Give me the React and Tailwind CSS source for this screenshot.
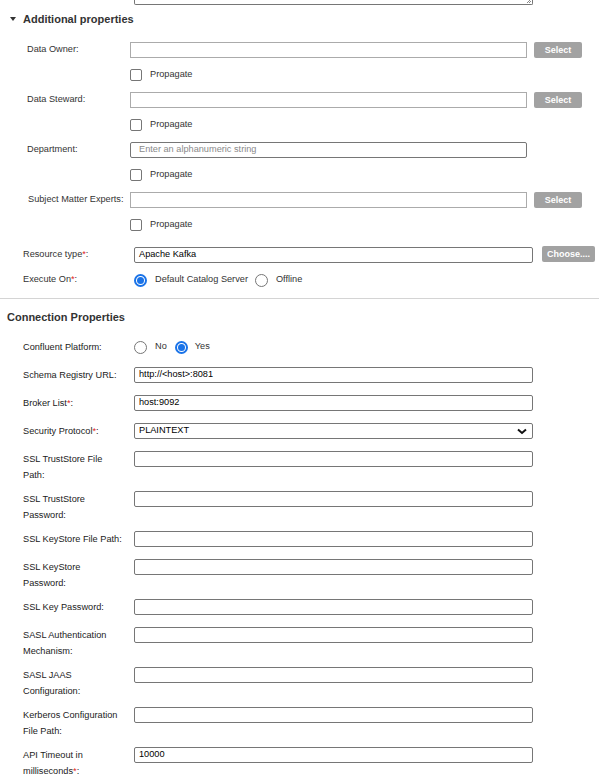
import React from 'react';

const Req = () => <span className="text-[#e0201b]">*</span>;

const Checkbox = () => (
    <span className="block w-[12px] h-[12px] rounded-[2px] border border-[#767676] bg-white" />
);

const Radio = ({ checked }) =>
    checked ? (
        <span className="flex w-[13px] h-[13px] items-center justify-center rounded-full border-2 border-[#1a73e8] bg-white">
            <span className="block w-[7px] h-[7px] rounded-full bg-[#1a73e8]" />
        </span>
    ) : (
        <span className="block w-[13px] h-[13px] rounded-full border border-[#767676] bg-white" />
    );

const GrayButton = ({ children, className = '' }) => (
    <button
        className={`h-[16px] rounded-[2px] bg-[#a2a2a2] text-[9px] font-bold text-white leading-none ${className}`}
    >
        {children}
    </button>
);

// Additional properties: label / input / select button, then a Propagate checkbox row
const PickerField = ({ label, placeholder, button = true, dark = false, labelX = 'pl-[27px]' }) => (
    <div>
        <div className="flex h-[16px] items-center">
            <div className={`w-[130px] ${labelX} text-[9.2px] text-[#333] whitespace-nowrap`}>{label}</div>
            <div
                className={`w-[397px] h-[16px] flex items-center px-[8px] text-[9.2px] bg-white ${
                    dark ? 'border border-[#767676] rounded-[2px]' : 'border border-[#ababab]'
                }`}
            >
                {placeholder && <span className="text-[#8a8a8a]">{placeholder}</span>}
            </div>
            {button && <GrayButton className="ml-[7px] w-[48px]">Select</GrayButton>}
        </div>
        <div className="mt-[8px] flex h-[18px] items-center pl-[130px]">
            <Checkbox />
            <span className="ml-[8px] text-[9.2px] text-[#333]">Propagate</span>
        </div>
    </div>
);

const CONNECTION = [
    { lines: ['Confluent Platform:'], type: 'radio', h: 'h-[28px]' },
    { lines: ['Schema Registry URL:'], value: 'http://<host>:8081', h: 'h-[28px]' },
    { lines: ['Broker List', '*:'], req: true, value: 'host:9092', h: 'h-[28px]' },
    { lines: ['Security Protocol', '*:'], req: true, type: 'select', value: 'PLAINTEXT', h: 'h-[28px]' },
    { lines: ['SSL TrustStore File', 'Path:'], h: 'h-[40px]' },
    { lines: ['SSL TrustStore', 'Password:'], h: 'h-[40px]' },
    { lines: ['SSL KeyStore File Path:'], h: 'h-[28px]' },
    { lines: ['SSL KeyStore', 'Password:'], h: 'h-[40px]' },
    { lines: ['SSL Key Password:'], h: 'h-[28px]' },
    { lines: ['SASL Authentication', 'Mechanism:'], h: 'h-[40px]' },
    { lines: ['SASL JAAS', 'Configuration:'], h: 'h-[40px]' },
    { lines: ['Kerberos Configuration', 'File Path:'], h: 'h-[40px]' },
    { lines: ['API Timeout in', 'milliseconds*:'], value: '10000', h: 'h-[40px]', apiReq: true },
];

const ConnLabel = ({ row }) => {
    if (row.req) {
        return (
            <div className="leading-[16px]">
                {row.lines[0]}
                <Req />:
            </div>
        );
    }
    return row.lines.map((line, i) => (
        <div key={i} className="leading-[16px]">
            {row.apiReq && i === 1 ? (
                <>
                    milliseconds<Req />:
                </>
            ) : (
                line
            )}
        </div>
    ));
};

const ConnControl = ({ row }) => {
    if (row.type === 'radio') {
        return (
            <div className="flex h-[16px] items-center text-[9.2px] text-[#333]">
                <Radio />
                <span className="ml-[8px]">No</span>
                <span className="ml-[8px]">
                    <Radio checked />
                </span>
                <span className="ml-[7px]">Yes</span>
            </div>
        );
    }
    if (row.type === 'select') {
        return (
            <div className="flex w-[399px] h-[16px] items-center justify-between rounded-[2px] border border-[#767676] bg-white pl-[4px] pr-[5px] text-[9.2px] text-black">
                <span>{row.value}</span>
                <svg width="10" height="7" viewBox="0 0 10 7">
                    <path d="M1 1.5 L5 5 L9 1.5" fill="none" stroke="#111" strokeWidth="2" />
                </svg>
            </div>
        );
    }
    return (
        <div className="flex w-[399px] h-[16px] items-center rounded-[2px] border border-[#767676] bg-white pl-[4px] text-[9.2px] text-black">
            {row.value}
        </div>
    );
};

export default function App() {
    return (
        <div
            className="relative w-[599px] h-[780px] overflow-hidden bg-white text-[#333]"
            style={{ fontFamily: '"Liberation Sans", Arial, sans-serif' }}
        >
            {/* bottom edge of the description textarea above */}
            <div className="relative ml-[134px] w-[399px] h-[5px] rounded-b-[2px] border-x border-b border-[#767676]">
                <svg className="absolute right-[1px] bottom-[1px]" width="7" height="4" viewBox="0 0 7 4">
                    <path d="M3 4 L7 0 M5 4 L7 2" stroke="#888" strokeWidth="1" />
                </svg>
            </div>

            <div className="flex h-[28px] items-center pl-[10px]">
                <svg width="6" height="4" viewBox="0 0 6 4">
                    <path d="M0 0 H6 L3 4 Z" fill="#333" />
                </svg>
                <span className="ml-[7px] text-[11px] font-bold text-[#333]">Additional properties</span>
            </div>

            <div className="mt-[9px] flex flex-col gap-[8px]">
                <PickerField label="Data Owner:" />
                <PickerField label="Data Steward:" />
                <PickerField label="Department:" placeholder="Enter an alphanumeric string" button={false} dark />
                <PickerField label="Subject Matter Experts:" labelX="pl-[28px]" />
            </div>

            <div className="mt-[13px] flex h-[16px] items-center">
                <div className="w-[134px] pl-[23px] text-[9.2px] text-[#333]">
                    Resource type<Req />:
                </div>
                <div className="flex w-[399px] h-[16px] items-center rounded-[2px] border border-[#767676] bg-white pl-[4px] text-[9.2px] text-black">
                    Apache Kafka
                </div>
                <GrayButton className="ml-[9px] w-[53px] -mt-[2px]">Choose....</GrayButton>
            </div>

            <div className="mt-[9px] flex h-[16px] items-center text-[9.2px] text-[#333]">
                <div className="w-[134px] pl-[23px]">
                    Execute On<Req />:
                </div>
                <Radio checked />
                <span className="ml-[8px]">Default Catalog Server</span>
                <span className="ml-[7px]">
                    <Radio />
                </span>
                <span className="ml-[8px]">Offline</span>
            </div>

            <div className="mt-[10px] h-px bg-[#d4d4d4]" />

            <div className="mt-[4px] flex h-[28px] items-center pl-[7px] text-[11px] font-bold text-[#333]">
                Connection Properties
            </div>

            <div className="mt-[8px] flex flex-col">
                {CONNECTION.map((row) => (
                    <div key={row.lines.join('')} className={`flex items-start ${row.h}`}>
                        <div className="w-[134px] pl-[23px] text-[9.2px] text-[#222] whitespace-nowrap">
                            <ConnLabel row={row} />
                        </div>
                        <ConnControl row={row} />
                    </div>
                ))}
            </div>
        </div>
    );
}
